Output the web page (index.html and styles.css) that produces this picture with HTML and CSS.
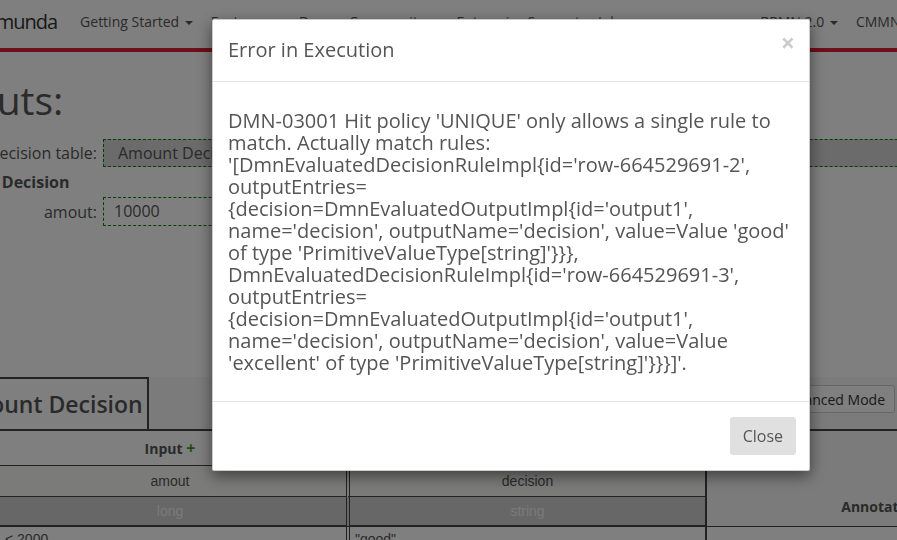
FILE: index.html
```html
<!DOCTYPE html>
<html lang="en">
<head>
  <meta charset="UTF-8">
  <meta name="viewport" content="width=device-width, initial-scale=1.0">
  <title>DMN Simulator</title>
  <link rel="stylesheet" href="styles.css">
</head>
<body>
  <div class="page">
    <nav class="navbar">
      <a class="brand">camunda</a>
      <ul class="nav">
        <li>Getting Started <span class="caret"></span></li>
        <li>Features <span class="caret"></span></li>
        <li>Docs</li>
        <li>Community <span class="caret"></span></li>
        <li>Enterprise Support</li>
        <li>Jobs</li>
      </ul>
      <ul class="nav nav-right">
        <li>BPMN 2.0 <span class="caret"></span></li>
        <li>CMMN <span class="caret"></span></li>
        <li>DMN <span class="caret"></span></li>
      </ul>
    </nav>

    <div class="content">
      <h1>Inputs:</h1>
      <div class="form-row">
        <label>Decision table:</label>
        <div class="field field-select">Amount Decision</div>
      </div>
      <h4 class="decision-name">Amount Decision</h4>
      <div class="form-row">
        <label>amout:</label>
        <div class="field field-input">10000</div>
      </div>

      <div class="tabs">
        <div class="tab">Amount Decision</div>
        <div class="toolbar">
          <button class="btn-mode">Advanced Mode</button>
        </div>
      </div>

      <table class="dt">
        <colgroup>
          <col class="c-hit">
          <col class="c-in">
          <col class="c-out">
          <col class="c-anno">
        </colgroup>
        <tr class="head">
          <th class="hit" rowspan="3">U</th>
          <th>Input <span class="plus">+</span></th>
          <th class="out">Output <span class="plus">+</span></th>
          <th class="anno" rowspan="3">Annotation</th>
        </tr>
        <tr class="names">
          <td>amout</td>
          <td class="out">decision</td>
        </tr>
        <tr class="types">
          <td>long</td>
          <td class="out">string</td>
        </tr>
        <tr class="rule">
          <td class="num">1</td>
          <td class="left">&lt; 2000</td>
          <td class="out left">"good"</td>
          <td class="anno-cell"></td>
        </tr>
      </table>
    </div>
  </div>

  <div class="backdrop"></div>

  <div class="modal">
    <div class="modal-header">
      <h4 class="modal-title">Error in Execution</h4>
      <button class="close">&times;</button>
    </div>
    <div class="modal-body">
      DMN-03001 Hit policy 'UNIQUE' only allows a single rule to match. Actually match rules: <span class="nobr">'[DmnEvaluatedDecisionRuleImpl{id='row-664529691-2',</span> outputEntries=<wbr>{decision=DmnEvaluatedOutputImpl{id='output1', name='decision', outputName='decision', value=Value 'good' of type 'PrimitiveValueType[string]'}}}, <span class="nobr">DmnEvaluatedDecisionRuleImpl{id='row-664529691-3',</span> outputEntries=<wbr>{decision=DmnEvaluatedOutputImpl{id='output1', name='decision', outputName='decision', value=Value 'excellent' of type 'PrimitiveValueType[string]'}}}]'.
    </div>
    <div class="modal-footer">
      <button class="btn">Close</button>
    </div>
  </div>
</body>
</html>
```

FILE: styles.css
```css
html, body {
  margin: 0;
  padding: 0;
}
body {
  width: 897px;
  height: 540px;
  overflow: hidden;
  background: #fff;
  font-family: "Open Sans", sans-serif;
  font-size: 14px;
  color: #555;
}
.page {
  width: 1180px;
  margin-left: -62px; /* page is scrolled to the right a bit */
}

/* top navigation */
.navbar {
  display: flex;
  align-items: center;
  height: 42px;
  padding: 0 139px 6px 39px;
  border-bottom: 4px solid #dc1e32;
}
.brand {
  font-size: 20px;
  letter-spacing: -1px;
  color: #333;
  margin-right: 23px;
}
.nav {
  display: flex;
  gap: 18px;
  list-style: none;
  margin: 0;
  padding: 0;
  color: #555;
}
.nav-right {
  margin-left: auto;
}
.caret {
  display: inline-block;
  width: 0;
  height: 0;
  margin-left: 2px;
  vertical-align: middle;
  border-top: 4px solid;
  border-left: 4px solid transparent;
  border-right: 4px solid transparent;
}

/* inputs form */
h1 {
  font-size: 39px;
  font-weight: 400;
  line-height: 44px;
  margin: 26px 0 17px;
  color: #555;
}
.form-row {
  display: flex;
  align-items: center;
}
.form-row label {
  width: 165px;
  padding-right: 6px;
  box-sizing: border-box;
  text-align: right;
  font-size: 16px;
}
.field {
  height: 28px;
  box-sizing: border-box;
  border: 1px dashed #008000;
  padding: 0 14px;
  line-height: 26px;
  font-size: 16px;
  color: #555;
}
.field-select {
  width: 900px;
  background: #d6d6d6;
}
.field-input {
  width: 400px;
  height: 29px;
  padding-left: 10px;
}
.decision-name {
  font-size: 16px;
  font-weight: 700;
  line-height: 22px;
  margin: 4px 0 4px -5px;
}

/* tabs + table */
.tabs {
  display: flex;
  align-items: center;
  height: 52px;
  margin-top: 151px;
}
.tab {
  align-self: stretch;
  margin-left: 3px;
  padding: 0 4px 0 10px;
  border: 2px solid #444;
  border-bottom: 0;
  font-size: 23px;
  font-weight: 600;
  line-height: 50px;
  color: #555;
}
.toolbar {
  flex: 1;
  align-self: stretch;
  display: flex;
  align-items: center;
  justify-content: flex-end;
  padding-right: 223px;
  background: #f6f6f6;
}
.btn-mode {
  height: 28px;
  margin-bottom: 8px;
  padding: 0 9px;
  border: 1px solid #ccc;
  border-radius: 3px;
  background: #fff;
  font-family: "Open Sans", sans-serif;
  font-size: 14px;
  color: #333;
}

.dt {
  border-collapse: separate;
  border-spacing: 0;
  table-layout: fixed;
  width: 1117px;
  border-top: 2px solid #444;
}
.c-hit { width: 56px; }
.c-in { width: 352px; }
.c-out { width: 359px; }
.c-anno { width: 350px; }
.dt th, .dt td {
  padding: 0 8px;
  text-align: center;
}
.dt .head th {
  height: 34px;
  font-size: 14px;
  font-weight: 700;
  border-bottom: 1px solid #444;
}
.plus {
  font-size: 16px;
  color: #3c9a1e;
}
.dt .names td, .dt .types td {
  font-family: "Liberation Sans", Arial, sans-serif;
  font-size: 14px;
}
.dt .names td {
  height: 30px;
  background: #f6f7f4;
  border-bottom: 1px solid #444;
  color: #555;
}
.dt .types td {
  height: 28px;
  background: #cecece;
  border-bottom: 2px solid #444;
  color: #f3f3f3;
}
.dt .out {
  border-left: 4px double #444;
}
.dt .hit, .dt .anno {
  vertical-align: bottom;
  padding-bottom: 10px;
  border-bottom: 4px double #444;
  background: #f6f6f6;
}
.dt .anno, .dt .anno-cell {
  border-left: 2px solid #444;
}
.dt .rule td {
  vertical-align: top;
  padding-top: 2px;
  line-height: 20px;
  font-family: "Liberation Sans", Arial, sans-serif;
  font-size: 14px;
  color: #555;
}
.dt .left {
  padding-left: 11px;
  text-align: left;
}
.dt .out.left {
  padding-left: 5px;
}

/* modal */
.backdrop {
  position: fixed;
  top: 0;
  left: 0;
  right: 0;
  bottom: 0;
  background: rgba(0, 0, 0, .5);
}
.modal {
  position: fixed;
  top: 19px;
  left: 212px;
  width: 598px;
  box-sizing: border-box;
  background: #fff;
  border: 1px solid rgba(0, 0, 0, .2);
  border-radius: 2px;
  box-shadow: 0 5px 15px rgba(0, 0, 0, .5);
}
.modal-header {
  display: flex;
  justify-content: space-between;
  align-items: flex-start;
  height: 62px;
  box-sizing: border-box;
  padding: 15px 14px 0 15px;
  border-bottom: 1px solid #e5e5e5;
}
.modal-title {
  margin: 0;
  font-size: 20px;
  font-weight: 400;
  line-height: 29px;
  color: #555;
}
.close {
  margin-top: -5px;
  padding: 0;
  border: 0;
  background: none;
  font-family: "Open Sans", sans-serif;
  font-size: 25px;
  font-weight: 700;
  line-height: 1;
  color: #000;
  opacity: .2;
}
.modal-body {
  padding: 28px 15px 27px;
  font-size: 20px;
  line-height: 22px;
  color: #555;
  overflow-wrap: break-word;
}
.nobr {
  white-space: nowrap;
}
.modal-footer {
  display: flex;
  justify-content: flex-end;
  padding: 15px 13px 15px 15px;
  border-top: 1px solid #e5e5e5;
}
.btn {
  padding: 7px 12px;
  border: 1px solid transparent;
  border-radius: 3px;
  background: #e0e0e0;
  font-family: "Open Sans", sans-serif;
  font-size: 16px;
  line-height: 22px;
  color: #555;
}
```
